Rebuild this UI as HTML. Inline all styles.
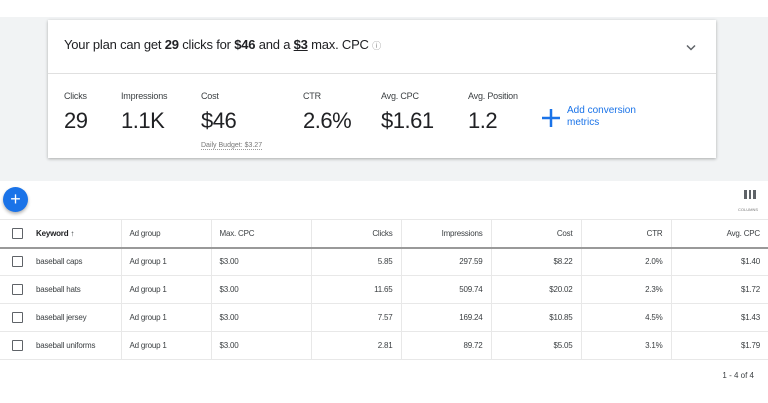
<!DOCTYPE html>
<html><head><style>
*{margin:0;padding:0;box-sizing:border-box}
body{width:768px;height:403px;background:#fff;font-family:"Liberation Sans",sans-serif;position:relative;overflow:hidden;color:#202124}
.gray{position:absolute;left:0;top:17px;width:768px;height:164px;background:#f1f3f4}
.card{position:absolute;left:48px;top:20px;width:668px;height:138px;background:#fff;box-shadow:0 1px 3px rgba(0,0,0,.3)}
.hd{position:absolute;left:16px;top:17px;font-size:13px;letter-spacing:-0.2px}
.hd b{font-weight:bold}
.div{position:absolute;left:0;top:53px;width:668px;height:1px;background:#e0e0e0}
.m{position:absolute;top:71px}
.m .l{font-size:9px;color:#3c4043;letter-spacing:-0.2px}
.m .v{font-size:22px;margin-top:7px;letter-spacing:-0.5px}
.sub{font-size:7px;color:#777;border-bottom:1px dotted #999;display:inline-block;margin-top:1px}
.add{position:absolute;left:494px;top:85px;color:#1a73e8;font-size:10px;line-height:12px}
.fab{position:absolute;left:3px;top:187px;width:25px;height:25px;border-radius:50%;background:#1a73e8;color:#fff;text-align:center;font-size:18px;line-height:24px;box-shadow:0 2px 3px rgba(0,0,0,.3)}
table{position:absolute;left:0;top:219px;width:768px;border-collapse:collapse;font-size:8px;color:#3c4043}
td{height:28px;border-right:1px solid #e8e8e8;border-bottom:1px solid #e8e8e8;padding:0 8px;letter-spacing:-0.2px;vertical-align:middle}
td:last-child{border-right:none}
tr.h td{border-bottom:2px solid #999;border-top:1px solid #e8e8e8}
.r{text-align:right}
td:first-child{padding-left:12px;line-height:11px}
.cb{display:inline-block;width:11px;height:11px;border:1.5px solid #5f6368;border-radius:1px;vertical-align:-3px;margin-right:13px}
</style></head><body>
<div class="gray"></div>
<div class="card">
<div class="hd">Your plan can get <b>29</b> clicks for <b>$46</b> and a <b style="text-decoration:underline">$3</b> max. CPC <span style="font-size:9px;color:#888">ⓘ</span></div>
<svg style="position:absolute;left:638px;top:24px" width="10" height="7" viewBox="0 0 10 7"><path d="M1 1.5L5 5.5L9 1.5" fill="none" stroke="#5f6368" stroke-width="1.5"/></svg>
<div class="div"></div>
<div class="m" style="left:16px"><div class="l">Clicks</div><div class="v">29</div></div>
<div class="m" style="left:73px"><div class="l">Impressions</div><div class="v">1.1K</div></div>
<div class="m" style="left:153px"><div class="l">Cost</div><div class="v">$46</div><div class="sub">Daily Budget: $3.27</div></div>
<div class="m" style="left:255px"><div class="l">CTR</div><div class="v">2.6%</div></div>
<div class="m" style="left:333px"><div class="l">Avg. CPC</div><div class="v">$1.61</div></div>
<div class="m" style="left:420px"><div class="l">Avg. Position</div><div class="v">1.2</div></div>
<svg style="position:absolute;left:493px;top:88px" width="20" height="20" viewBox="0 0 20 20"><path d="M10 1V19M1 10H19" stroke="#1a73e8" stroke-width="2.5"/></svg>
<div class="add"><div style="margin-left:25px">Add conversion<br>metrics</div></div>
</div>
<div class="fab">+</div>
<div style="position:absolute;left:744px;top:190px;width:12px;height:9px;display:flex;gap:2px"><i style="flex:1;background:#5f6368"></i><i style="flex:1;background:#5f6368"></i><i style="flex:1;background:#5f6368"></i></div>
<div style="position:absolute;left:738px;top:207px;font-size:4px;color:#777">COLUMNS</div>
<table>
<tr class="h"><td style="width:121px"><span class="cb"></span><b style="color:#202124">Keyword</b> ↑</td><td style="width:90px">Ad group</td><td style="width:100px">Max. CPC</td><td class="r" style="width:90px">Clicks</td><td class="r" style="width:90px">Impressions</td><td class="r" style="width:90px">Cost</td><td class="r" style="width:90px">CTR</td><td class="r">Avg. CPC</td></tr>
<tr><td><span class="cb"></span>baseball caps</td><td>Ad group 1</td><td>$3.00</td><td class="r">5.85</td><td class="r">297.59</td><td class="r">$8.22</td><td class="r">2.0%</td><td class="r">$1.40</td></tr>
<tr><td><span class="cb"></span>baseball hats</td><td>Ad group 1</td><td>$3.00</td><td class="r">11.65</td><td class="r">509.74</td><td class="r">$20.02</td><td class="r">2.3%</td><td class="r">$1.72</td></tr>
<tr><td><span class="cb"></span>baseball jersey</td><td>Ad group 1</td><td>$3.00</td><td class="r">7.57</td><td class="r">169.24</td><td class="r">$10.85</td><td class="r">4.5%</td><td class="r">$1.43</td></tr>
<tr><td><span class="cb"></span>baseball uniforms</td><td>Ad group 1</td><td>$3.00</td><td class="r">2.81</td><td class="r">89.72</td><td class="r">$5.05</td><td class="r">3.1%</td><td class="r">$1.79</td></tr>
</table>
<div style="position:absolute;right:14px;top:371px;font-size:8px;color:#3c4043">1 - 4 of 4</div>
</body></html>
